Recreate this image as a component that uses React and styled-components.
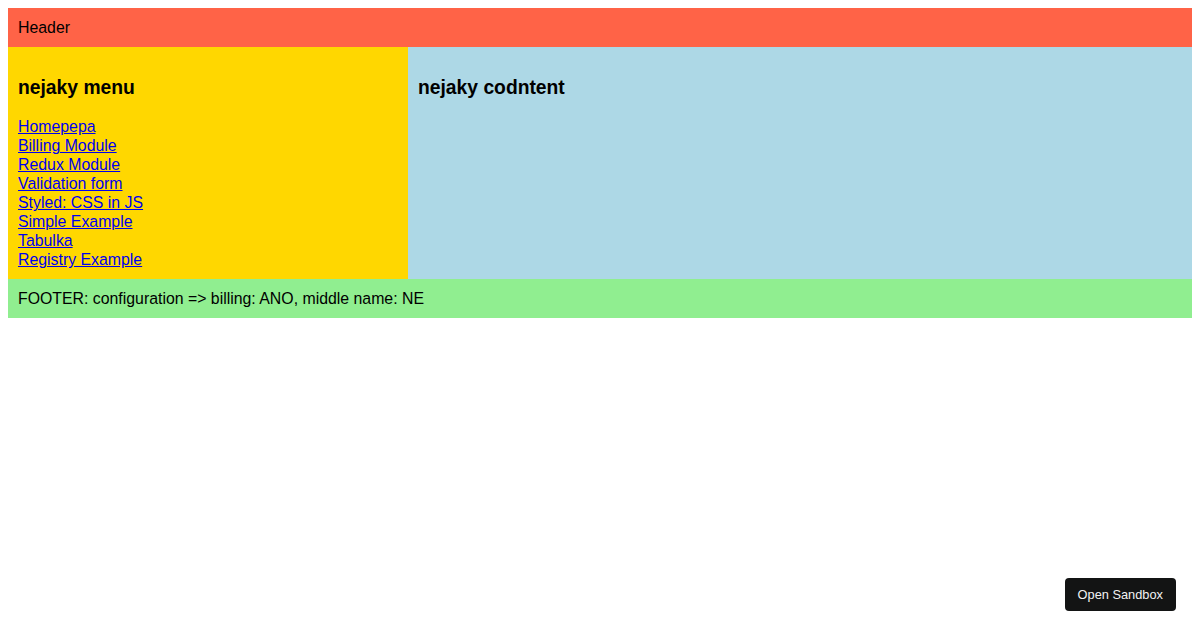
import styled, { createGlobalStyle } from "styled-components";

const GlobalStyle = createGlobalStyle`
  body {
    margin: 8px;
    font-family: "Liberation Sans", Arial, sans-serif;
    font-size: 15.85px;
    color: #000;
  }
`;

const links = [
  "Homepepa",
  "Billing Module",
  "Redux Module",
  "Validation form",
  "Styled: CSS in JS",
  "Simple Example",
  "Tabulka",
  "Registry Example",
];

const App = () => {
  return (
    <>
      <GlobalStyle />
      <Layout>
        <Header>Header</Header>
        <Main>
          <Menu>
            <Title>nejaky menu</Title>
            <LinkList>
              {links.map((l) => (
                <MenuLink key={l} href="#">
                  {l}
                </MenuLink>
              ))}
            </LinkList>
          </Menu>
          <Content>
            <Title>nejaky codntent</Title>
          </Content>
        </Main>
        <Footer>FOOTER: configuration =&gt; billing: ANO, middle name: NE</Footer>
      </Layout>
      <SandboxButton>Open Sandbox</SandboxButton>
    </>
  );
};

const Layout = styled.div`
  display: flex;
  flex-direction: column;
`;

const Header = styled.header`
  background: tomato;
  padding: 10px;
  line-height: 19px;
`;

const Main = styled.div`
  display: flex;
`;

const Menu = styled.nav`
  width: 400px;
  box-sizing: border-box;
  background: gold;
  padding: 10px;
`;

const Content = styled.main`
  flex: 1;
  background: lightblue;
  padding: 10px;
`;

const Title = styled.h3`
  font-size: 19.3px;
  font-weight: bold;
  line-height: 23px;
  margin: 18.72px 0;
`;

const LinkList = styled.div`
  display: flex;
  flex-direction: column;
  align-items: flex-start;
`;

const MenuLink = styled.a`
  color: #0000ee;
  text-decoration: underline;
  line-height: 19px;
`;

const Footer = styled.footer`
  background: lightgreen;
  padding: 10px;
  line-height: 19px;
`;

const SandboxButton = styled.button`
  position: fixed;
  right: 24px;
  bottom: 19px;
  height: 33px;
  padding: 0 13px;
  background: #131414;
  color: #f2f2f2;
  border: none;
  border-radius: 4px;
  font-family: "Liberation Sans", Arial, sans-serif;
  font-size: 12.8px;
  cursor: pointer;
`;

export default App;
